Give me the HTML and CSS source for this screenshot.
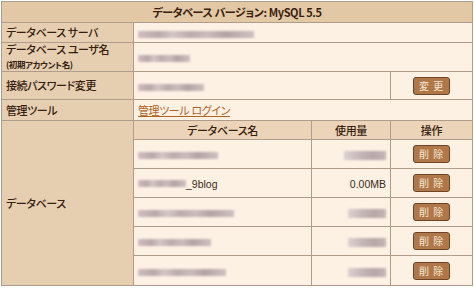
FILE: index.html
```html
<!DOCTYPE html>
<html lang="ja">
<head>
<meta charset="utf-8">
<title>データベース</title>
<link rel="stylesheet" href="styles.css">
</head>
<body>
<table class="db-table">
  <colgroup>
    <col class="c-label">
    <col class="c-name">
    <col class="c-usage">
    <col class="c-op">
  </colgroup>
  <tr class="r-title">
    <th colspan="4" class="title">データベース バージョン: MySQL 5.5</th>
  </tr>
  <tr class="r-server">
    <th class="label">データベース サーバ</th>
    <td colspan="3" class="value"><span class="blur" style="width:116px"></span></td>
  </tr>
  <tr class="r-user">
    <th class="label label-two"><span class="main">データベース ユーザ名</span><span class="sub">(初期アカウント名)</span></th>
    <td colspan="3" class="value"><span class="blur" style="width:52px"></span></td>
  </tr>
  <tr class="r-pass">
    <th class="label">接続パスワード変更</th>
    <td colspan="2" class="value"><span class="blur" style="width:66px"></span></td>
    <td class="op"><button class="btn" type="button">変 更</button></td>
  </tr>
  <tr class="r-tool">
    <th class="label">管理ツール</th>
    <td colspan="3" class="value"><a class="link" href="#">管理ツール ログイン</a></td>
  </tr>
  <tr class="r-head">
    <th rowspan="6" class="label db-label">データベース</th>
    <th class="sub-head">データベース名</th>
    <th class="sub-head">使用量</th>
    <th class="sub-head">操作</th>
  </tr>
  <tr class="r-db">
    <td class="value"><span class="blur" style="width:80px"></span></td>
    <td class="value usage"><span class="blur small" style="width:42px"></span></td>
    <td class="op"><button class="btn" type="button">削 除</button></td>
  </tr>
  <tr class="r-db">
    <td class="value"><span class="blur" style="width:48px"></span><span class="latin">_9blog</span></td>
    <td class="value usage"><span class="latin">0.00MB</span></td>
    <td class="op"><button class="btn" type="button">削 除</button></td>
  </tr>
  <tr class="r-db">
    <td class="value"><span class="blur" style="width:96px"></span></td>
    <td class="value usage"><span class="blur small" style="width:38px"></span></td>
    <td class="op"><button class="btn" type="button">削 除</button></td>
  </tr>
  <tr class="r-db">
    <td class="value"><span class="blur" style="width:73px"></span></td>
    <td class="value usage"><span class="blur small" style="width:38px"></span></td>
    <td class="op"><button class="btn" type="button">削 除</button></td>
  </tr>
  <tr class="r-db r-last">
    <td class="value"><span class="blur" style="width:88px"></span></td>
    <td class="value usage"><span class="blur small" style="width:38px"></span></td>
    <td class="op"><button class="btn" type="button">削 除</button></td>
  </tr>
</table>
</body>
</html>
```

FILE: styles.css
```css
* { box-sizing: border-box; }

html, body {
  margin: 0;
  padding: 0;
  background: #ffffff;
}

body {
  font-family: "Noto Sans CJK JP", "Noto Sans", sans-serif;
  font-size: 11px;
  color: #3b2416;
  font-feature-settings: "palt" 1;
}

.db-table {
  margin: 1px 0 0 1px;
  width: 472px;
  border-collapse: collapse;
  table-layout: fixed;
  border: 1px solid #9b8776;
}

.c-label { width: 132px; }
.c-name { width: 178px; }
.c-usage { width: 79px; }
.c-op { width: 82px; }

.db-table th,
.db-table td {
  border: 1px solid #b09c8a;
  padding: 0 4px;
  line-height: 13px;
  vertical-align: middle;
}

.r-title { height: 21px; }
.r-server { height: 20px; }
.r-user { height: 29px; }
.r-pass { height: 28px; }
.r-tool { height: 21px; }
.r-head { height: 19px; }
.r-db { height: 29px; }
.r-last { height: 30px; }

.title {
  background: #e2c8a4;
  font-weight: bold;
  text-align: center;
  color: #3a1e10;
  letter-spacing: -0.4px;
}

.label {
  background: #e6cfb1;
  text-align: left;
  font-weight: 500;
  padding-left: 6px;
  color: #35200f;
  letter-spacing: -0.4px;
}

.db-table .label-two {
  vertical-align: top;
}

.label .main {
  display: block;
  line-height: 13px;
}

.label .sub {
  display: block;
  margin-top: 2px;
  font-size: 8.5px;
  line-height: 12px;
  font-weight: bold;
  letter-spacing: -0.4px;
}

.value {
  background: #fdf1e4;
}

.sub-head {
  background: #ebd4b7;
  font-weight: 500;
  text-align: center;
  color: #35200f;
  letter-spacing: -0.3px;
}

.op {
  background: #fdf1e4;
  text-align: center;
}

.usage {
  text-align: right;
}

.link {
  color: #b3611f;
  text-decoration: underline;
  letter-spacing: -0.4px;
}

.latin {
  font-family: "Liberation Sans", Arial, sans-serif;
  font-size: 10.5px;
  color: #3b2a20;
  vertical-align: middle;
}

.blur {
  display: inline-block;
  vertical-align: middle;
  height: 7px;
  background: linear-gradient(90deg, #cfbfc0 0%, #b9a8aa 18%, #d3c6c6 30%, #bcabad 45%, #cbbcbd 60%, #b4a3a6 75%, #cec0c1 100%);
  filter: blur(1px);
}

.blur.small {
  height: 9px;
  background: linear-gradient(90deg, #ddd1d1 0%, #c3b4b6 40%, #b8a7a9 70%, #c5b6b8 100%);
}

.btn {
  width: 37px;
  height: 18px;
  padding: 0;
  margin: 0;
  border: 1px solid #6f4325;
  border-radius: 3px;
  background: #b07849;
  color: #f6e7d4;
  font-family: "Noto Sans CJK JP", sans-serif;
  font-size: 10px;
  line-height: 16px;
  letter-spacing: 1px;
  cursor: pointer;
}
```
